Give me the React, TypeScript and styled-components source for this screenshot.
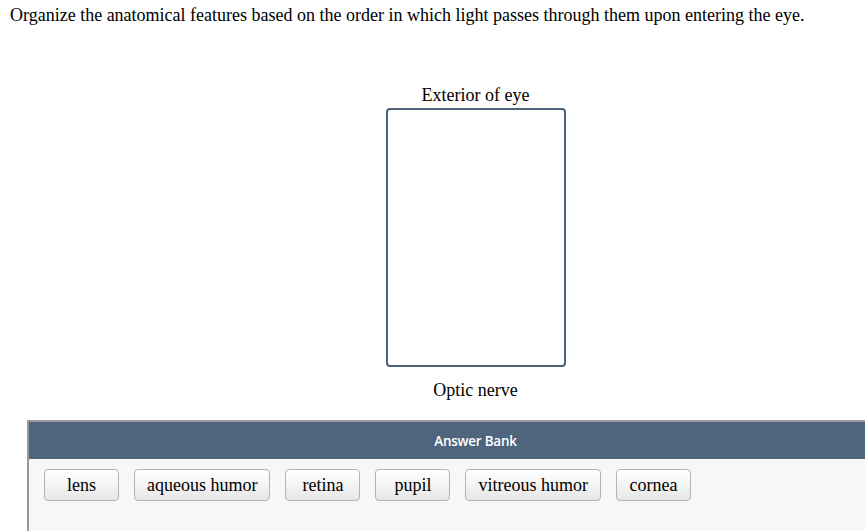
import React from "react";
import styled, { createGlobalStyle } from "styled-components";

const Global = createGlobalStyle`
  html, body {
    margin: 0;
    padding: 0;
    background: #ffffff;
    overflow: hidden;
  }
  body {
    font-family: "Liberation Serif", "Times New Roman", serif;
    font-size: 18px;
    color: #000;
  }
`;

const Page = styled.div`
  width: 865px;
  height: 531px;
  overflow: hidden;
  padding: 5px 0 0 0;
  box-sizing: border-box;
`;

const Prompt = styled.div`
  margin: 0 0 0 10px;
  font-size: 18px;
  line-height: 20px;
  white-space: nowrap;
`;

const Frame = styled.div`
  width: 897px;
  margin-left: 27px;
  margin-top: 60px;
  display: flex;
  flex-direction: column;
`;

const Sequence = styled.div`
  display: flex;
  flex-direction: column;
  align-items: center;
`;

const EndLabel = styled.div<{ $gapTop?: number; $gapBottom?: number }>`
  font-size: 18px;
  line-height: 20px;
  margin-top: ${(p) => p.$gapTop ?? 0}px;
  margin-bottom: ${(p) => p.$gapBottom ?? 0}px;
`;

const DropZone = styled.div`
  width: 180px;
  height: 259px;
  box-sizing: border-box;
  border: 2px solid #4e627a;
  border-radius: 4px;
  background: #ffffff;
`;

const Bank = styled.div`
  margin-top: 20px;
  border-top: 2px solid #999999;
  border-left: 2px solid #999999;
  background: #f7f7f7;
  height: 120px;
`;

const BankHeader = styled.div`
  height: 37px;
  background: #4f647d;
  color: #ffffff;
  display: flex;
  align-items: center;
  justify-content: center;
  padding-right: 2px;
  font-family: "Open Sans", "Liberation Sans", sans-serif;
  font-weight: 600;
  font-size: 13.4px;
  letter-spacing: -0.2px;
`;

const Tiles = styled.div`
  display: flex;
  gap: 15px;
  padding: 10px 15px;
`;

const Tile = styled.div`
  min-width: 75px;
  height: 32px;
  box-sizing: border-box;
  padding: 0 12px;
  display: flex;
  align-items: center;
  justify-content: center;
  border: 1px solid #b4b4b4;
  border-radius: 4px;
  background: linear-gradient(to bottom, #ffffff 0%, #f4f4f4 50%, #e6e6e6 100%);
  font-size: 18px;
  white-space: nowrap;
`;

const answers = ["lens", "aqueous humor", "retina", "pupil", "vitreous humor", "cornea"];

export default function App() {
  return (
    <>
      <Global />
      <Page>
        <Prompt>
          Organize the anatomical features based on the order in which light passes through them upon entering the eye.
        </Prompt>
        <Frame>
          <Sequence>
            <EndLabel $gapBottom={3}>Exterior of eye</EndLabel>
            <DropZone />
            <EndLabel $gapTop={13}>Optic nerve</EndLabel>
          </Sequence>
          <Bank>
            <BankHeader>Answer Bank</BankHeader>
            <Tiles>
              {answers.map((a) => (
                <Tile key={a}>{a}</Tile>
              ))}
            </Tiles>
          </Bank>
        </Frame>
      </Page>
    </>
  );
}
